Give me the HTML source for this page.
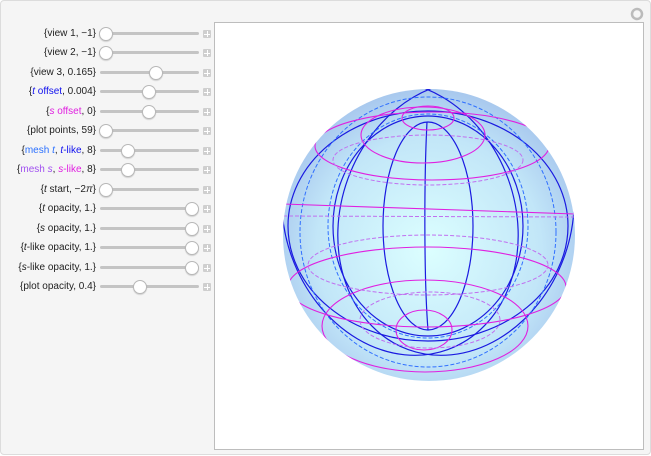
<!DOCTYPE html>
<html><head><style>
html,body{margin:0;padding:0;width:651px;height:456px;overflow:hidden;background:#fff}
#p{position:absolute;left:0;top:0;width:649px;height:453px;background:#f5f5f5;border:1px solid #dcdcdc;border-radius:4px}
.r{position:absolute;left:0;width:96px;text-align:right;font:10px "Liberation Sans",sans-serif;color:#222;white-space:nowrap}
.tr{position:absolute;left:100px;width:99px;height:3px;background:#c4c4c4;border-radius:2px}
.k{position:absolute;width:12px;height:12px;border-radius:50%;background:#fff;border:1px solid #b8b8b8;box-shadow:0 1px 1px rgba(0,0,0,.15)}
.pl{position:absolute;left:203px;width:8px;height:8px;background:#cfcfcf;border-radius:1px}
.pl:before{content:"";position:absolute;left:1px;top:3.5px;width:6px;height:1px;background:#fff}
.pl:after{content:"";position:absolute;left:3.5px;top:1px;width:1px;height:6px;background:#fff}
#box{position:absolute;left:214px;top:22px;width:428px;height:426px;background:#fff;border:1px solid #bdbdbd}
.b{color:#1010ee}.m{color:#e020e0}.lb{color:#2a70ff}.pu{color:#a050f0}
</style></head><body>
<div id="p">
<svg style="position:absolute;left:629px;top:6px" width="14" height="14"><circle cx="7" cy="7" r="5" fill="none" stroke="#bbb" stroke-width="2.5"/></svg>
</div>
<div id="box"></div>
<svg style="position:absolute;left:0;top:0" width="651" height="456">
<defs><radialGradient id="g" cx="0.5" cy="0.55" r="0.55"><stop offset="0" stop-color="#dcffff"/><stop offset="0.7" stop-color="#c2e6f8"/><stop offset="1" stop-color="#a8c8ee"/></radialGradient>
<clipPath id="c"><circle cx="429" cy="235" r="146"/></clipPath></defs>
<circle cx="429" cy="235" r="146" fill="url(#g)"/>
<g clip-path="url(#c)">
<g fill="none" stroke="#1a1ae0" stroke-width="1.2">
<path d="M427 122 C424 180 424 280 428 330"/>
<ellipse cx="428" cy="226" rx="45" ry="104"/>
<ellipse cx="428" cy="226" rx="95" ry="110"/>
<ellipse cx="428" cy="226" rx="140" ry="115"/>
<ellipse cx="400" cy="218" rx="115" ry="140" transform="rotate(-20 400 218)"/>
<ellipse cx="456" cy="218" rx="115" ry="140" transform="rotate(20 456 218)"/>
</g>
<g fill="none" stroke="#3070ff" stroke-width="1" stroke-dasharray="4 2">
<ellipse cx="428" cy="232" rx="128" ry="135"/>
<ellipse cx="428" cy="226" rx="100" ry="112"/>
</g>
<g fill="none" stroke="#e020e0" stroke-width="1.1">
<ellipse cx="428" cy="118" rx="26" ry="12"/>
<ellipse cx="423" cy="135" rx="62" ry="28"/>
<ellipse cx="432" cy="146" rx="117" ry="34"/>
<path d="M283 204 L575 214"/>
<ellipse cx="427" cy="287" rx="139" ry="40"/>
<ellipse cx="425" cy="326" rx="103" ry="46"/>
<ellipse cx="424" cy="330" rx="28" ry="20"/>
</g>
<g fill="none" stroke="#c070f0" stroke-width="1" stroke-dasharray="4 2">
<path d="M283 216 L575 217"/>
<ellipse cx="428" cy="160" rx="95" ry="25"/>
<ellipse cx="428" cy="265" rx="120" ry="30"/>
<ellipse cx="430" cy="320" rx="70" ry="28"/>
</g>
</g>
</svg>
<div class="r" style="top:28px">{view 1, −1}</div><div class="tr" style="top:32px"></div><div class="k" style="left:99px;top:27px"></div><div class="pl" style="top:30px"></div>
<div class="r" style="top:47px">{view 2, −1}</div><div class="tr" style="top:51px"></div><div class="k" style="left:99px;top:46px"></div><div class="pl" style="top:49px"></div>
<div class="r" style="top:67px">{view 3, 0.165}</div><div class="tr" style="top:71px"></div><div class="k" style="left:149px;top:66px"></div><div class="pl" style="top:69px"></div>
<div class="r" style="top:86px">{<span class="b"><i>t</i> offset</span>, 0.004}</div><div class="tr" style="top:90px"></div><div class="k" style="left:142px;top:85px"></div><div class="pl" style="top:88px"></div>
<div class="r" style="top:106px">{<span class="m"><i>s</i> offset</span>, 0}</div><div class="tr" style="top:110px"></div><div class="k" style="left:142px;top:105px"></div><div class="pl" style="top:108px"></div>
<div class="r" style="top:125px">{plot points, 59}</div><div class="tr" style="top:129px"></div><div class="k" style="left:99px;top:124px"></div><div class="pl" style="top:127px"></div>
<div class="r" style="top:145px">{<span class="lb">mesh <i>t</i></span>, <span class="b"><i>t</i>-like</span>, 8}</div><div class="tr" style="top:149px"></div><div class="k" style="left:121px;top:144px"></div><div class="pl" style="top:147px"></div>
<div class="r" style="top:164px">{<span class="pu">mesh <i>s</i></span>, <span class="m"><i>s</i>-like</span>, 8}</div><div class="tr" style="top:168px"></div><div class="k" style="left:121px;top:163px"></div><div class="pl" style="top:166px"></div>
<div class="r" style="top:184px">{<i>t</i> start, −2<i>π</i>}</div><div class="tr" style="top:188px"></div><div class="k" style="left:99px;top:183px"></div><div class="pl" style="top:186px"></div>
<div class="r" style="top:203px">{<i>t</i> opacity, 1.}</div><div class="tr" style="top:207px"></div><div class="k" style="left:185px;top:202px"></div><div class="pl" style="top:205px"></div>
<div class="r" style="top:223px">{<i>s</i> opacity, 1.}</div><div class="tr" style="top:227px"></div><div class="k" style="left:185px;top:222px"></div><div class="pl" style="top:225px"></div>
<div class="r" style="top:242px">{<i>t</i>-like opacity, 1.}</div><div class="tr" style="top:246px"></div><div class="k" style="left:185px;top:241px"></div><div class="pl" style="top:244px"></div>
<div class="r" style="top:262px">{<i>s</i>-like opacity, 1.}</div><div class="tr" style="top:266px"></div><div class="k" style="left:185px;top:261px"></div><div class="pl" style="top:264px"></div>
<div class="r" style="top:281px">{plot opacity, 0.4}</div><div class="tr" style="top:285px"></div><div class="k" style="left:133px;top:280px"></div><div class="pl" style="top:283px"></div>
</body></html>
